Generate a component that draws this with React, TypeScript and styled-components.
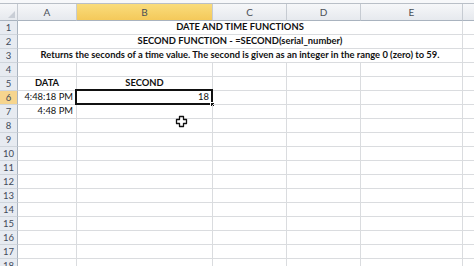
import { Fragment } from "react";
import styled, { createGlobalStyle } from "styled-components";

const GlobalStyle = createGlobalStyle`
  html, body {
    margin: 0;
    padding: 0;
    background: #ffffff;
    overflow: hidden;
  }
`;

const Window = styled.div`
  width: 474px;
  height: 266px;
  overflow: hidden;
  background: #ffffff;
  font-family: Lato, "Open Sans", "Liberation Sans", sans-serif;
  position: relative;
`;

const FormulaStrip = styled.div`
  height: 3px;
  background: #f7f8fa;
  border-bottom: 1px solid #b9bfc7;
`;

const Sheet = styled.div`
  display: grid;
  grid-template-columns: 18px 59px 136px 74px 74px 102px 40px;
  grid-template-rows: 17px repeat(18, 14px);
`;

const ColHead = styled.div<{ $active?: boolean }>`
  display: flex;
  align-items: center;
  justify-content: center;
  font-size: 10px;
  color: #4a4f57;
  box-sizing: border-box;
  border-right: 1px solid #c6cbd2;
  border-bottom: 1px solid #a9b3bf;
  background: ${(p) =>
    p.$active
      ? "linear-gradient(#f9dc7c, #f4c95a)"
      : "linear-gradient(#f6f7f9, #e6e9ee)"};
`;

const Corner = styled(ColHead)`
  position: relative;
  &::after {
    content: "";
    position: absolute;
    right: 2px;
    bottom: 2px;
    border-left: 7px solid transparent;
    border-bottom: 7px solid #c9ced6;
  }
`;

const RowHead = styled.div<{ $active?: boolean }>`
  display: flex;
  align-items: center;
  justify-content: center;
  font-size: 9.5px;
  color: #3f4a5a;
  box-sizing: border-box;
  border-right: 1px solid #a9b3bf;
  border-bottom: 1px solid #cfd5dc;
  background: ${(p) => (p.$active ? "#f6d58e" : "#e7ebf1")};
`;

const Cell = styled.div<{
  $span?: number;
  $align?: "left" | "center" | "right";
  $bold?: boolean;
}>`
  grid-column: span ${(p) => p.$span ?? 1};
  display: flex;
  align-items: flex-end;
  justify-content: ${(p) =>
    p.$align === "center"
      ? "center"
      : p.$align === "right"
      ? "flex-end"
      : "flex-start"};
  padding: 0 3px 1px;
  box-sizing: border-box;
  border-right: 1px solid #dadcdf;
  border-bottom: 1px solid #dadcdf;
  font-size: 9.4px;
  line-height: 12px;
  font-weight: ${(p) => (p.$bold ? 700 : 400)};
  color: #111111;
  white-space: nowrap;
  overflow: visible;
  position: relative;
`;

const SelectedCell = styled(Cell)`
  &::before {
    content: "";
    position: absolute;
    left: -2px;
    top: -2px;
    right: -1px;
    bottom: -1px;
    border: 2px solid #111111;
  }
  &::after {
    content: "";
    position: absolute;
    right: -3px;
    bottom: -3px;
    width: 5px;
    height: 5px;
    background: #111111;
    border: 1px solid #ffffff;
    box-sizing: border-box;
  }
`;

const Cursor = styled.svg`
  position: absolute;
  left: 175px;
  top: 115px;
`;

const columns = ["A", "B", "C", "D", "E", ""];

type CellData = {
  text?: string;
  span?: number;
  align?: "left" | "center" | "right";
  bold?: boolean;
  selected?: boolean;
};

const blank = (): CellData[] => columns.map(() => ({}));

const rows: CellData[][] = [
  [{ text: "DATE AND TIME FUNCTIONS", span: 5, align: "center", bold: true }, {}],
  [{ text: "SECOND FUNCTION - =SECOND(serial_number)", span: 5, align: "center", bold: true }, {}],
  [
    {
      text: "Returns the seconds of a time value. The second is given as an integer in the range 0 (zero) to 59.",
      span: 5,
      align: "center",
      bold: true,
    },
    {},
  ],
  blank(),
  [
    { text: "DATA", align: "center", bold: true },
    { text: "SECOND", align: "center", bold: true },
    {},
    {},
    {},
    {},
  ],
  [
    { text: "4:48:18 PM", align: "right" },
    { text: "18", align: "right", selected: true },
    {},
    {},
    {},
    {},
  ],
  [{ text: "4:48 PM", align: "right" }, {}, {}, {}, {}, {}],
];

while (rows.length < 18) rows.push(blank());

export default function App() {
  return (
    <Window>
      <GlobalStyle />
      <FormulaStrip />
      <Sheet>
        <Corner />
        {columns.map((c, i) => (
          <ColHead key={i} $active={c === "B"}>
            {c}
          </ColHead>
        ))}
        {rows.map((row, r) => (
          <Fragment key={r}>
            <RowHead $active={r === 5}>{r + 1}</RowHead>
            {row.map((cell, c) =>
              cell.selected ? (
                <SelectedCell key={c} $align={cell.align} $bold={cell.bold}>
                  {cell.text}
                </SelectedCell>
              ) : (
                <Cell key={c} $span={cell.span} $align={cell.align} $bold={cell.bold}>
                  {cell.text}
                </Cell>
              )
            )}
          </Fragment>
        ))}
      </Sheet>
      <Cursor width="14" height="14" viewBox="0 0 14 14">
        <path
          d="M4.5 1.5h4v3h3v4h-3v3h-4v-3h-3v-4h3z"
          fill="#ffffff"
          stroke="#111111"
          strokeWidth="1.3"
          strokeLinejoin="round"
        />
      </Cursor>
    </Window>
  );
}
